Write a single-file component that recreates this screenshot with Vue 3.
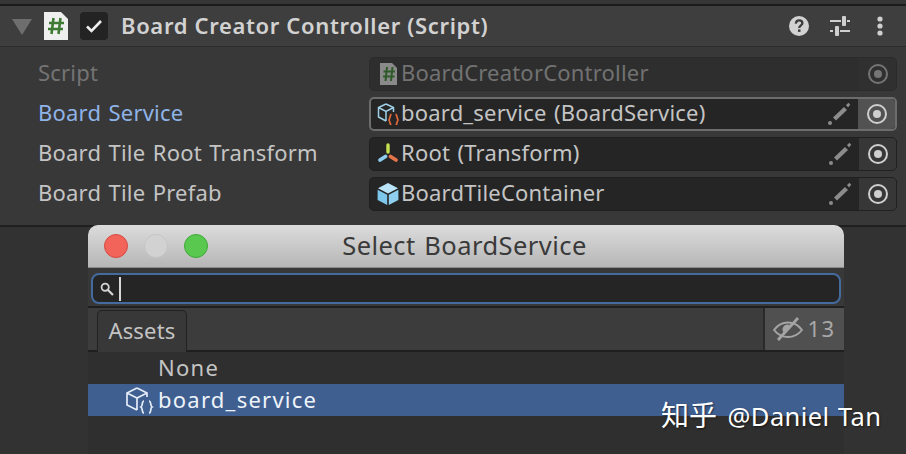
<script setup>
const rows = [
  { label: 'Board Service', value: 'board_service (BoardService)', icon: 'service', cls: 'focus', edit: true },
  { label: 'Board Tile Root Transform', value: 'Root (Transform)', icon: 'axes', cls: '', edit: true },
  { label: 'Board Tile Prefab', value: 'BoardTileContainer', icon: 'cube', cls: '', edit: true }
]
</script>

<template>
  <div class="page">
    <div class="topstrip"></div>
    <header class="head">
      <svg class="fold" width="20" height="16" viewBox="0 0 20 16"><path d="M0 0H20L10 16Z" fill="#6e6e6e"/></svg>
      <svg class="file" width="24" height="28" viewBox="0 0 24 28">
        <path d="M0 0H17L24 7V28H0Z" fill="#efefef"/>
        <path d="M9.500 6 7.500 22M16.500 6 14.500 22M5 11H20M4 17H19" stroke="#3f7a34" stroke-width="2.600" fill="none"/>
      </svg>
      <span class="check">
        <svg width="18" height="14" viewBox="0 0 18 14"><path d="M2 7.500 6.500 12 16 2" stroke="#eee" stroke-width="2.600" fill="none"/></svg>
      </span>
      <span class="title">Board Creator Controller (Script)</span>
      <span class="tools">
        <svg width="20" height="20" viewBox="0 0 20 20"><circle cx="10" cy="10" r="10" fill="#d2d2d2"/><path d="M6.800 7.600C7 5.400 8.400 4.400 10.200 4.400 12.100 4.400 13.400 5.600 13.400 7.200 13.400 9.400 10.200 9.400 10.200 12" stroke="#3c3c3c" stroke-width="2.300" fill="none"/><rect x="9" y="13.400" width="2.500" height="2.500" fill="#3c3c3c"/></svg>
        <svg width="20" height="20" viewBox="0 0 20 20" fill="#cfcfcf"><rect y="4" width="11" height="2"/><rect x="12" y="0" width="4" height="10" rx="1"/><rect x="17" y="4" width="3" height="2"/><rect y="14" width="3" height="2"/><rect x="5" y="10" width="4" height="10" rx="1"/><rect x="10" y="14" width="10" height="2"/></svg>
        <svg class="dots" width="6" height="20" viewBox="0 0 6 20" fill="#cfcfcf"><circle cx="3" cy="3" r="2.600"/><circle cx="3" cy="10" r="2.600"/><circle cx="3" cy="17" r="2.600"/></svg>
      </span>
    </header>

    <section class="props">
      <div class="row">
        <span class="label dim">Script</span>
        <div class="field disabled">
          <svg class="fi" width="22" height="22" viewBox="0 0 22 22">
            <path d="M3 0H15L20 5V22H3Z" fill="#8a8a8a"/>
            <path d="M10 4 8.500 18M15.500 4 14 18M6.500 8.500H18M6 13.500H17.500" stroke="#2f5a29" stroke-width="2" fill="none"/>
          </svg>
          <span class="val">BoardCreatorController</span>
          <span class="target"><i></i></span>
        </div>
      </div>
      <div v-for="r in rows" :key="r.label" class="row">
        <span class="label" :class="{ blue: r.cls === 'focus' }">{{ r.label }}</span>
        <div class="field" :class="r.cls">
          <svg v-if="r.icon === 'service'" class="fi" width="22" height="22" viewBox="0 0 22 22" fill="none">
            <path d="M9 1 16.500 4.500V9M9 1 1.500 4.500V14L9 18M1.500 4.500 9 8.500 16.500 4.500M9 8.500V18" stroke="#9fd0e8" stroke-width="1.500"/>
            <path d="M14.500 11.500C12.500 11.500 13.500 16.500 11.500 17 13.500 17.500 12.500 22 14.500 22M18.500 11.500C20.500 11.500 19.500 16.500 21.500 17 19.500 17.500 20.500 22 18.500 22" stroke="#e2683a" stroke-width="1.800"/>
          </svg>
          <svg v-else-if="r.icon === 'axes'" class="fi" width="22" height="22" viewBox="0 0 22 22">
            <path d="M11 2V9" stroke="#c6e24e" stroke-width="3.400" stroke-linecap="round"/>
            <path d="M8.500 13.500 3 17" stroke="#8fcdf0" stroke-width="3.800" stroke-linecap="round"/>
            <path d="M13.500 13.500 19 17" stroke="#e4744a" stroke-width="3.800" stroke-linecap="round"/>
          </svg>
          <svg v-else class="fi" width="22" height="22" viewBox="0 0 22 22">
            <path d="M11 0 21 5.200 11 10.400 1 5.200Z" fill="#b9e4f7"/>
            <path d="M.6 6.800 10.200 11.800V22L.6 17Z" fill="#7dc6ec"/>
            <path d="M21.400 6.800 11.800 11.800V22L21.400 17Z" fill="#8fd0f0"/>
          </svg>
          <span class="val">{{ r.value }}</span>
          <svg class="pencil" width="24" height="24" viewBox="0 0 24 24">
            <path d="M6 15.500 17 5 20 8 9 18.500Z" fill="#8c8c8c"/>
            <circle cx="3" cy="21" r="2" fill="#8c8c8c"/>
            <path d="M19 3 21.500 .8 23.200 2.800 21 5.500Z" fill="#8c8c8c"/>
          </svg>
          <span class="target"><i></i></span>
        </div>
      </div>
    </section>

    <div class="divider"></div>

    <div class="window">
      <div class="titlebar">
        <span class="light red"></span>
        <span class="light grey"></span>
        <span class="light green"></span>
        <span class="wtitle">Select BoardService</span>
      </div>
      <div class="searchrow">
        <div class="search">
          <svg width="14" height="14" viewBox="0 0 14 14" fill="none" stroke="#d4d4d4">
            <circle cx="5.200" cy="5.200" r="3.600" stroke-width="1.800"/><path d="M8 8 13 13" stroke-width="2.200"/>
          </svg>
          <span class="caret"></span>
        </div>
      </div>
      <div class="tabs">
        <span class="tab"><span class="up">Assets</span></span>
        <span class="spacer"></span>
        <span class="hidden">
          <svg width="30" height="24" viewBox="0 0 30 24" fill="none" stroke="#a4a4a4">
            <path d="M1 13C5 7.500 10 5.500 15 5.500S25 7.500 29 13C25 18 20 20 15 20S5 18 1 13Z" stroke-width="2"/>
            <path d="M15 7.500A5 5 0 0 0 11 16L17.500 8.500Z" fill="#a4a4a4" stroke="none"/>
            <path d="M5 23 25 1" stroke-width="2.800"/>
          </svg>
          <span class="up count">13</span>
        </span>
      </div>
      <div class="list">
        <div class="item"><span class="up">None</span></div>
        <div class="item sel">
          <svg width="30" height="28" viewBox="0 0 30 28" fill="none">
            <path d="M13 2 23 7V11M13 2 3 7V19L13 24M3 7 13 12 23 7M13 12V24" stroke="#e4edf8" stroke-width="1.700"/>
            <path d="M20 15C17.500 15 19 20 17 21 19 22 17.500 27 20 27M25 15C27.500 15 26 20 28 21 26 22 27.500 27 25 27" stroke="#e4edf8" stroke-width="1.700"/>
          </svg>
          <span class="up">board_service</span>
        </div>
      </div>
    </div>

    <div class="mark"><span class="cjk">知乎</span> @Daniel Tan</div>
  </div>
</template>

<style>
html, body { margin: 0; background: #323232; }
</style>

<style scoped>
.page {
  position: relative;
  width: 906px;
  height: 454px;
  overflow: hidden;
  background: #323232;
  font-family: "Noto Sans", "Noto Sans CJK SC", sans-serif;
  font-size: 22px;
  letter-spacing: .2px;
  word-spacing: 1.500px;
  color: #c4c4c4;
}
.topstrip { height: 4px; background: #363636; border-bottom: 2px solid #1c1c1c; }
.head {
  height: 40px;
  display: flex;
  align-items: center;
  padding: 0 23px 0 12px;
  background: #3e3e3e;
  border-bottom: 1px solid #2c2c2c;
}
.fold { margin-right: 12px; margin-top: 2px; }
.file { margin-right: 12px; }
.check {
  width: 28px;
  height: 28px;
  border-radius: 4px;
  background: #232323;
  display: flex;
  align-items: center;
  justify-content: center;
  margin-right: 13px;
}
.title { font-weight: 600; color: #d2d2d2; letter-spacing: .65px; word-spacing: 0; padding-bottom: 2px; }
.tools { margin-left: auto; display: flex; align-items: center; gap: 21px; }
.dots { margin-left: 6px; }
.props {
  height: 178px;
  padding: 9px 9px 0 38px;
  background: #383838;
  box-sizing: border-box;
  display: flex;
  flex-direction: column;
  gap: 4px;
}
.row { height: 36px; display: flex; align-items: center; }
.label { width: 331px; flex: none; padding-bottom: 4px; }
.label.dim { color: #747474; }
.label.blue { color: #8fb3e6; }
.field {
  flex: 1;
  height: 34px;
  box-sizing: border-box;
  background: #252525;
  border: 1px solid #202020;
  border-radius: 5px;
  display: flex;
  align-items: center;
  padding-left: 7px;
}
.fi { flex: none; margin-right: 2px; }
.val { flex: 1; white-space: nowrap; padding-bottom: 4px; }
.disabled { background: #2e2e2e; border-color: #2b2b2b; }
.disabled .val { color: #727272; }
.focus { border: 2px solid #6c6c6c; padding-left: 6px; }
.pencil { margin-right: 7px; }
.target {
  width: 37px;
  align-self: stretch;
  background: #373737;
  border-radius: 0 4px 4px 0;
  display: flex;
  align-items: center;
  justify-content: center;
}
.focus .target { background: #525252; }
.target i {
  width: 16px;
  height: 16px;
  border: 2px solid #cfcfcf;
  border-radius: 50%;
  position: relative;
  display: block;
}
.target i::after {
  content: "";
  position: absolute;
  left: 4px;
  top: 4px;
  width: 8px;
  height: 8px;
  border-radius: 50%;
  background: #cfcfcf;
}
.disabled .target { background: #303030; }
.disabled .target i { border-color: #757575; }
.disabled .target i::after { background: #757575; }
.divider { height: 2px; background: #1f1f1f; }
.window {
  position: absolute;
  left: 88px;
  top: 225px;
  width: 756px;
  height: 229px;
  border-radius: 10px 10px 0 0;
  overflow: hidden;
  background: #2f2f2f;
  display: flex;
  flex-direction: column;
}
.titlebar {
  height: 43px;
  flex: none;
  display: flex;
  align-items: center;
  gap: 16px;
  padding-left: 16px;
  position: relative;
  background: linear-gradient(#dcdcdc, #b6b6b6);
  box-sizing: border-box;
  border-bottom: 1px solid #8c8c8c;
}
.light { width: 24px; height: 24px; border-radius: 50%; box-sizing: border-box; }
.red { background: #f2645a; border: 1px solid #d64a42; }
.grey { background: #d2d2d2; border: 1px solid #c4c4c4; }
.green { background: #58c84e; border: 1px solid #3ea838; }
.wtitle {
  position: absolute;
  left: 0;
  right: 0;
  text-align: center;
  color: #3a3a3a;
  font-size: 25.500px;
  letter-spacing: .45px;
  padding-bottom: 2px;
  padding-right: 3px;
}
.searchrow {
  height: 40px;
  flex: none;
  background: #383838;
  padding: 5px 3px 4px;
  box-sizing: border-box;
  border-bottom: 2px solid #1f1f1f;
}
.search {
  height: 31px;
  box-sizing: border-box;
  border: 2px solid #446a9e;
  border-radius: 8px;
  background: #252525;
  display: flex;
  align-items: center;
  padding-left: 7px;
}
.caret { width: 2px; height: 24px; background: #d8d8d8; margin-left: 5px; }
.tabs {
  height: 44px;
  flex: none;
  display: flex;
  box-sizing: border-box;
  background: #3c3c3c;
  border-bottom: 2px solid #1f1f1f;
  padding-left: 9px;
}
.tab {
  width: 90px;
  box-sizing: border-box;
  border: 1px solid #222;
  border-bottom: 0;
  background: #383838;
  border-radius: 5px 5px 0 0;
  display: flex;
  align-items: center;
  justify-content: center;
  margin-top: 2px;
  margin-bottom: -2px;
}
.up { padding-bottom: 3px; }
.count { letter-spacing: 1.500px; }
.spacer { flex: 1; }
.hidden {
  width: 81px;
  display: flex;
  align-items: center;
  justify-content: center;
  gap: 4px;
  background: #505050;
  border-left: 2px solid #2a2a2a;
  color: #a8a8a8;
  box-sizing: border-box;
}
.item {
  height: 32px;
  display: flex;
  align-items: center;
  padding-left: 70px;
  color: #c4c4c4;
  letter-spacing: 1.250px;
}
.sel {
  background: #3f5f90;
  color: #eef3fa;
  padding-left: 36px;
  gap: 4px;
}
.mark {
  position: absolute;
  left: 661px;
  top: 394px;
  font-size: 25.500px;
  color: #fff;
  letter-spacing: .4px;
  white-space: nowrap;
  text-shadow: 1px 1px 2px rgba(0,0,0,.5);
}
.cjk { font-size: 28px; letter-spacing: 0; margin-right: 2px; }
</style>
